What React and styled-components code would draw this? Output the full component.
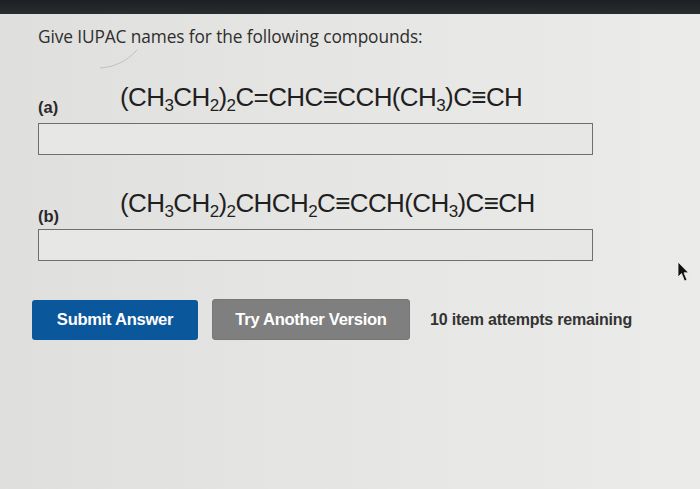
import React from "react";
import styled, { createGlobalStyle } from "styled-components";

const Global = createGlobalStyle`
  html, body { margin: 0; padding: 0; }
  body {
    width: 700px;
    height: 489px;
    overflow: hidden;
    background: linear-gradient(90deg, #dfdfdd 0%, #e5e5e3 45%, #ebebea 100%);
    font-family: "Liberation Sans", Arial, sans-serif;
  }
`;

const Page = styled.div`
  position: relative;
  width: 700px;
  height: 489px;
  display: flex;
  flex-direction: column;
`;

const TopBar = styled.div`
  height: 14px;
  background: linear-gradient(180deg, #1d2023 0%, #2a2d30 100%);
  flex-shrink: 0;
`;

const Content = styled.div`
  display: flex;
  flex-direction: column;
  padding: 13px 0 0 38px;
`;

const Title = styled.div`
  font-family: "Open Sans", "Noto Sans", sans-serif;
  font-size: 17.3px;
  line-height: 20px;
  color: #2e2e2e;
  letter-spacing: -0.1px;
`;

const QuestionRow = styled.div`
  display: flex;
  align-items: flex-end;
  margin-top: ${(p) => p.$top}px;
`;

const Label = styled.div`
  width: 82px;
  font-size: 16.5px;
  font-weight: bold;
  line-height: 18px;
  color: #2a2a2a;
  margin-bottom: ${(p) => p.$drop}px;
`;

const Formula = styled.div`
  font-size: 26px;
  line-height: 30px;
  color: #1f1f1f;
  letter-spacing: -0.6px;
  sub {
    font-size: 17px;
    line-height: 0;
    vertical-align: -5px;
  }
`;

const AnswerBox = styled.div`
  width: 555px;
  height: 32px;
  box-sizing: border-box;
  margin-top: 11px;
  border: 1.5px solid #6e6e6e;
  background: #e7e7e5;
`;

const ButtonRow = styled.div`
  display: flex;
  align-items: center;
  margin: 38px 0 0 -6px;
  gap: 14px;
`;

const Button = styled.div`
  width: ${(p) => p.$w}px;
  height: ${(p) => p.$h}px;
  box-sizing: border-box;
  display: flex;
  align-items: center;
  justify-content: center;
  background: ${(p) => p.$bg};
  border-radius: 3px;
  color: #fff;
  font-size: 16.6px;
  font-weight: bold;
  letter-spacing: -0.3px;
  ${(p) => (p.$border ? `border: 1px solid ${p.$border};` : "")}
`;

const Remaining = styled.div`
  margin-left: 6px;
  font-size: 16px;
  font-weight: bold;
  color: #333;
  letter-spacing: -0.2px;
`;

const Cursor = styled.svg`
  position: absolute;
  left: 677px;
  top: 261px;
`;

const Scratch = styled.svg`
  position: absolute;
  left: 98px;
  top: 48px;
`;

export default function App() {
  return (
    <>
      <Global />
      <Page>
        <TopBar />
        <Content>
          <Title>Give IUPAC names for the following compounds:</Title>

          <QuestionRow $top={35}>
            <Label $drop={-4}>(a)</Label>
            <Formula>
              (CH<sub>3</sub>CH<sub>2</sub>)<sub>2</sub>C=CHC≡CCH(CH<sub>3</sub>)C≡CH
            </Formula>
          </QuestionRow>
          <AnswerBox />

          <QuestionRow $top={33}>
            <Label $drop={-7}>(b)</Label>
            <Formula>
              (CH<sub>3</sub>CH<sub>2</sub>)<sub>2</sub>CHCH<sub>2</sub>C≡CCH(CH<sub>3</sub>)C≡CH
            </Formula>
          </QuestionRow>
          <AnswerBox />

          <ButtonRow>
            <Button $w={166} $h={40} $bg="#0b579c">Submit Answer</Button>
            <Button $w={198} $h={41} $bg="#7f7f7f" $border="#777">Try Another Version</Button>
            <Remaining>10 item attempts remaining</Remaining>
          </ButtonRow>
        </Content>

        <Scratch width="42" height="22" viewBox="0 0 42 22">
          <path d="M2 20 C 16 19, 28 14, 39 2" fill="none" stroke="#bdbdbb" strokeWidth="0.9" />
        </Scratch>
        <Cursor width="12" height="22" viewBox="0 0 12 22">
          <path d="M1 1 L1 16 L4.5 12.5 L7.5 20 L10 19 L7 11.8 L11.5 11.8 Z" fill="#111" stroke="#eee" strokeWidth="0.8" />
        </Cursor>
      </Page>
    </>
  );
}
